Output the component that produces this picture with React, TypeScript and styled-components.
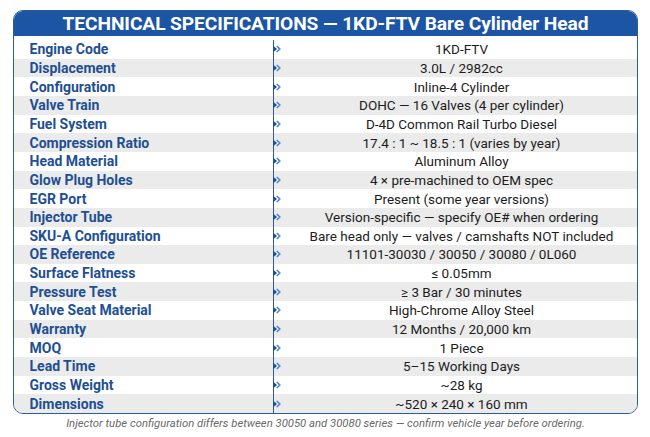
import styled, { createGlobalStyle } from "styled-components";

const GlobalStyle = createGlobalStyle`
  html, body {
    margin: 0;
    padding: 0;
    background: #ffffff;
  }
  body {
    font-family: Roboto, "Liberation Sans", sans-serif;
  }
`;

const specs: [string, string][] = [
  ["Engine Code", "1KD-FTV"],
  ["Displacement", "3.0L / 2982cc"],
  ["Configuration", "Inline-4 Cylinder"],
  ["Valve Train", "DOHC — 16 Valves (4 per cylinder)"],
  ["Fuel System", "D-4D Common Rail Turbo Diesel"],
  ["Compression Ratio", "17.4 : 1 ~ 18.5 : 1 (varies by year)"],
  ["Head Material", "Aluminum Alloy"],
  ["Glow Plug Holes", "4 × pre-machined to OEM spec"],
  ["EGR Port", "Present (some year versions)"],
  ["Injector Tube", "Version-specific — specify OE# when ordering"],
  ["SKU-A Configuration", "Bare head only — valves / camshafts NOT included"],
  ["OE Reference", "11101-30030 / 30050 / 30080 / 0L060"],
  ["Surface Flatness", "≤ 0.05mm"],
  ["Pressure Test", "≥ 3 Bar / 30 minutes"],
  ["Valve Seat Material", "High-Chrome Alloy Steel"],
  ["Warranty", "12 Months / 20,000 km"],
  ["MOQ", "1 Piece"],
  ["Lead Time", "5–15 Working Days"],
  ["Gross Weight", "~28 kg"],
  ["Dimensions", "~520 × 240 × 160 mm"],
];

const Page = styled.div`
  width: 650px;
  height: 437px;
  padding: 10px 12px 0 13px;
  box-sizing: border-box;
  display: flex;
  flex-direction: column;
`;

const Card = styled.div`
  border: 1.5px solid #2b5c9d;
  border-radius: 10px;
  overflow: hidden;
  background: #ffffff;
`;

const Header = styled.div`
  height: 24.5px;
  background: #1c55a4;
  color: #ffffff;
  font-weight: 700;
  font-size: 19.2px;
  letter-spacing: -0.1px;
  display: flex;
  align-items: center;
  justify-content: center;
`;

const Table = styled.div`
  display: grid;
  grid-template-columns: 260px 1fr;
  grid-auto-rows: 18.65px;
  padding-top: 4.6px;
`;

const Label = styled.div<{ $striped: boolean }>`
  background: ${(p) => (p.$striped ? "#ebebeb" : "#ffffff")};
  color: #1e4f92;
  font-weight: 700;
  font-size: 14px;
  padding-left: 15.5px;
  display: flex;
  align-items: center;
  border-right: 1.5px solid #2b5c9d;
  white-space: nowrap;
`;

const Value = styled.div<{ $striped: boolean }>`
  position: relative;
  background: ${(p) => (p.$striped ? "#ebebeb" : "#ffffff")};
  color: #1c1c1c;
  font-size: 13.5px;
  padding-left: 12px;
  display: flex;
  align-items: center;
  justify-content: center;
  white-space: nowrap;
`;

const Chevron = styled.svg`
  position: absolute;
  left: -1px;
  top: 50%;
  margin-top: -4px;
  width: 9px;
  height: 8px;
`;

const Note = styled.div`
  text-align: center;
  font-style: italic;
  font-size: 11.3px;
  color: #6a6a6a;
  margin-top: 3px;
`;

function Arrow() {
  return (
    <Chevron viewBox="0 0 9 8">
      <path d="M0 0.5 L4 4 L0 7.5 Z" fill="#1a50a0" />
      <path d="M3.8 1 L6.8 4 L3.8 7" fill="none" stroke="#4f86cf" strokeWidth="1.6" />
    </Chevron>
  );
}

export default function App() {
  return (
    <>
      <GlobalStyle />
      <Page>
        <Card>
          <Header>TECHNICAL SPECIFICATIONS — 1KD-FTV Bare Cylinder Head</Header>
          <Table>
            {specs.map(([label, value], i) => [
              <Label key={label} $striped={i % 2 === 1}>
                {label}
              </Label>,
              <Value key={label + "-v"} $striped={i % 2 === 1}>
                <Arrow />
                {value}
              </Value>,
            ])}
          </Table>
        </Card>
        <Note>
          Injector tube configuration differs between 30050 and 30080 series — confirm vehicle year before ordering.
        </Note>
      </Page>
    </>
  );
}
